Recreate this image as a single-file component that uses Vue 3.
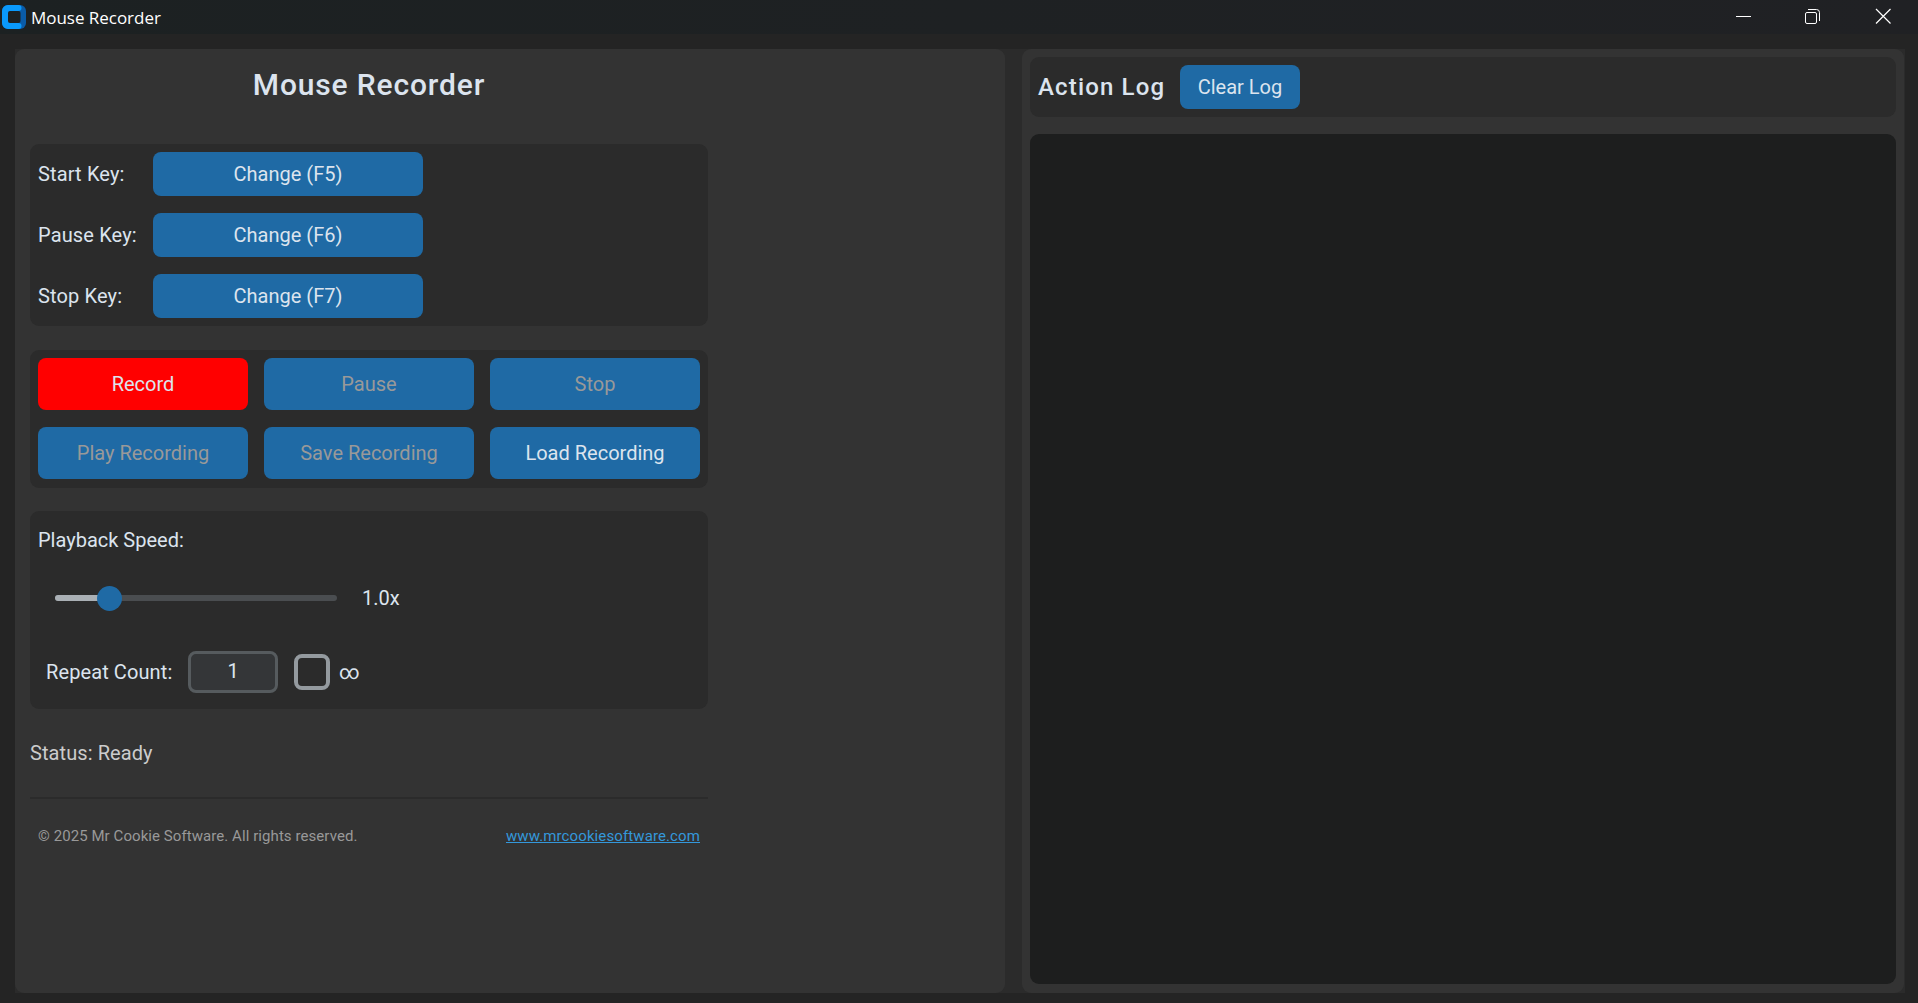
<script setup>
import { ref } from 'vue';

const speed = ref(1.0);
const repeatCount = ref("1");
const infinite = ref(false);
const status = ref("Ready");
const logLines = ref([]);

const hotkeys = [
    { label: "Start Key:", key: "F5" },
    { label: "Pause Key:", key: "F6" },
    { label: "Stop Key:", key: "F7" }
];

const controls = [
    { text: "Record", type: "record" },
    { text: "Pause", disabled: true },
    { text: "Stop", disabled: true },
    { text: "Play Recording", disabled: true },
    { text: "Save Recording", disabled: true },
    { text: "Load Recording" }
];

const clearLog = () => {
    logLines.value = [];
};
</script>

<template>
  <div class="window">
    <header class="titlebar">
        <svg class="app-icon" width="24" height="24" viewBox="0 0 24 24">
            <rect width="24" height="24" rx="6" fill="#0a5ca8" />
            <path d="M6 0H16.500A3 3 0 0 1 16.500 6V18A3 3 0 0 1 16.500 24H6A6 6 0 0 1 0 18V6A6 6 0 0 1 6 0Z" fill="#0a99fb" />
            <rect x="6" y="6" width="12.500" height="12" rx="2" fill="#1d2122" />
        </svg>
        <span class="window-title">Mouse Recorder</span>
        <svg class="window-buttons" width="158" height="17" viewBox="0 0 158 17" fill="none" stroke="#fff">
            <path d="M1 8.500h15" />
            <rect x="70.500" y="4.500" width="11" height="11" rx="1.500" />
            <path d="M73 1.500H81.500A3 3 0 0 1 84.500 4.500V13" />
            <path d="M141 1l14.500 14.500M155.500 1L141 15.500" stroke-width="1.200" />
        </svg>
    </header>

    <main class="content">
        <section class="panel left">
            <h1 class="title">Mouse Recorder</h1>

            <div class="frame hotkeys">
                <template v-for="item in hotkeys" :key="item.key">
                    <span class="label">{{ item.label }}</span>
                    <button class="btn">Change ({{ item.key }})</button>
                </template>
            </div>

            <div class="frame controls">
                <button v-for="c in controls" :key="c.text" class="btn" :class="{ record: c.type === 'record' }" :disabled="c.disabled">{{ c.text }}</button>
            </div>

            <div class="frame playback">
                <div class="speed-label">Playback Speed:</div>
                <div class="speed-row">
                    <div class="slider">
                        <div class="slider-fill"></div>
                        <div class="slider-knob"></div>
                    </div>
                    <span>{{ speed.toFixed(1) }}x</span>
                </div>
                <div class="repeat-row">
                    <span class="repeat-label">Repeat Count:</span>
                    <div class="entry">{{ repeatCount }}</div>
                    <div class="checkbox" :class="{ checked: infinite }" @click="infinite = !infinite"></div>
                    <span>∞</span>
                </div>
            </div>

            <div class="status">Status: {{ status }}</div>

            <footer class="footer">
                <span class="copyright">© 2025 Mr Cookie Software. All rights reserved.</span>
                <a class="link">www.mrcookiesoftware.com</a>
            </footer>
        </section>

        <section class="panel right">
            <div class="frame log-header">
                <h2 class="log-title">Action Log</h2>
                <button class="btn clear" @click="clearLog">Clear Log</button>
            </div>
            <div class="log">
                <div v-for="(line, i) in logLines" :key="i">{{ line }}</div>
            </div>
        </section>
    </main>
  </div>
</template>

<style>
body {
    margin: 0;
    background: #242424;
}
</style>

<style scoped>
* {
    box-sizing: border-box;
}

.window {
    width: 100vw;
    height: 100vh;
    display: flex;
    flex-direction: column;
    background: #242424;
    color: #dce4ee;
    font-family: Roboto, "Liberation Sans", sans-serif;
    font-size: 20px;
    overflow: hidden;
}

.titlebar {
    height: 34px;
    display: flex;
    align-items: flex-start;
    padding: 5px 25px 0 2px;
    background: linear-gradient(90deg, #1c2122, #202124);
}

.window-title {
    margin-left: 5px;
    font-family: "Open Sans", "Noto Sans", sans-serif;
    font-size: 17px;
    line-height: 25px;
    letter-spacing: -0.03px;
    color: #fff;
}

.window-buttons {
    margin: 3px 0 0 auto;
}

.content {
    flex: 1;
    display: flex;
    justify-content: space-between;
    margin: 15px 13px 10px 15px;
    padding-right: 1px;
    background: #2b2b2b;
}

.panel {
    background: #333333;
    border-radius: 9px;
}

.left {
    width: 990px;
    padding: 0 15px;
}

.right {
    width: 882px;
    padding: 8px 8px 9px;
    display: flex;
    flex-direction: column;
    gap: 17px;
}

.frame {
    background: #2b2b2b;
    border-radius: 9px;
}

.left > * {
    width: 678px;
}

.title {
    height: 95px;
    margin: 0;
    padding-top: 18px;
    font-size: 30px;
    line-height: 36px;
    font-weight: 500;
    letter-spacing: 0.85px;
    text-align: center;
}

.btn {
    border: 0;
    padding: 0;
    border-radius: 8px;
    background: #1f6aa5;
    color: #dce4ee;
    font: inherit;
}

.btn:disabled {
    color: #999999;
}

.btn.record {
    background: #ff0000;
}

.hotkeys {
    display: grid;
    grid-template-columns: 115px 270px;
    grid-auto-rows: 44px;
    row-gap: 17px;
    padding: 8px;
}

.label {
    line-height: 44px;
    letter-spacing: 0.14px;
}

.controls {
    display: grid;
    grid-template-columns: repeat(3, 210px);
    grid-auto-rows: 52px;
    gap: 17px 16px;
    height: 138px;
    margin-top: 24px;
    padding: 8px;
}

.playback {
    height: 198px;
    margin-top: 23px;
    padding: 17px 8px 0;
}

.speed-label {
    line-height: 24px;
}

.speed-row {
    display: flex;
    align-items: center;
    height: 24px;
    margin-top: 34px;
    padding-left: 17px;
}

.slider {
    display: flex;
    align-items: center;
    width: 282px;
    height: 6px;
    margin-right: 25px;
    border-radius: 3px;
    background: #4a4d50;
}

.slider-fill {
    width: 54px;
    height: 6px;
    border-radius: 3px;
    background: #aab0b5;
}

.slider-knob {
    flex: none;
    width: 25px;
    height: 25px;
    margin-left: -12px;
    border-radius: 50%;
    background: #1f6aa5;
}

.repeat-row {
    display: flex;
    align-items: center;
    height: 42px;
    margin-top: 41px;
    padding-left: 8px;
}

.repeat-label {
    width: 142px;
    letter-spacing: 0.1px;
}

.entry {
    width: 90px;
    height: 42px;
    border: 3px solid #565b5e;
    border-radius: 8px;
    background: #343638;
    text-align: center;
    line-height: 34px;
}

.checkbox {
    width: 36px;
    height: 36px;
    margin: 0 9px 0 16px;
    border: 4px solid #949a9f;
    border-radius: 8px;
}

.checkbox.checked {
    background: #1f6aa5;
}

.status {
    height: 88px;
    padding-top: 32px;
    line-height: 24px;
    letter-spacing: 0.08px;
    color: #cccccc;
}

.footer {
    display: flex;
    justify-content: space-between;
    padding: 27px 8px 0;
    border-top: 2px solid #2b2b2b;
    font-size: 15px;
    line-height: 20px;
    color: #999999;
}

.copyright {
    letter-spacing: 0.07px;
}

.link {
    color: #3498db;
    letter-spacing: 0.11px;
    text-decoration: underline;
}

.log-header {
    display: flex;
    align-items: center;
    height: 60px;
    padding: 0 8px;
}

.log-title {
    width: 142px;
    margin: 0;
    font-size: 24px;
    font-weight: 500;
    letter-spacing: 1.15px;
}

.clear {
    width: 120px;
    height: 44px;
}

.log {
    flex: 1;
    padding: 12px;
    border-radius: 9px;
    background: #1d1e1e;
    overflow: hidden;
}
</style>
